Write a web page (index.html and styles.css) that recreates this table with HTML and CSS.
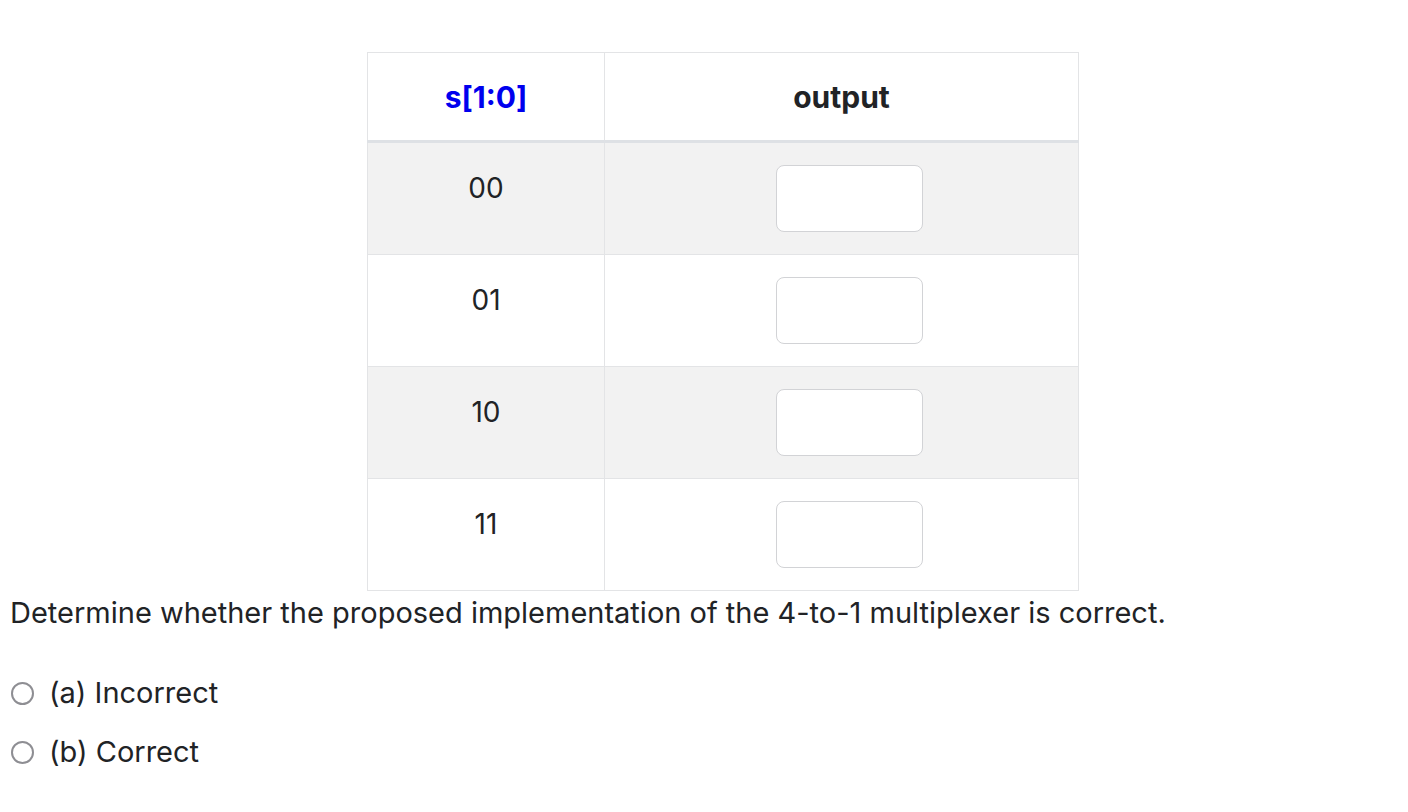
FILE: index.html
```html
<!DOCTYPE html>
<html>
<head>
<meta charset="utf-8">
<link rel="stylesheet" href="styles.css">
</head>
<body>
<div class="page">
  <table class="truth">
    <thead>
      <tr><th class="sel">s[1:0]</th><th class="out">output</th></tr>
    </thead>
    <tbody>
      <tr class="odd"><td class="key"><div class="num">00</div></td><td class="val"><input class="box" type="text"></td></tr>
      <tr><td class="key"><div class="num">01</div></td><td class="val"><input class="box" type="text"></td></tr>
      <tr class="odd"><td class="key"><div class="num">10</div></td><td class="val"><input class="box" type="text"></td></tr>
      <tr><td class="key"><div class="num">11</div></td><td class="val"><input class="box" type="text"></td></tr>
    </tbody>
  </table>
  <p class="question">Determine whether the proposed implementation of the 4-to-1 multiplexer is correct.</p>
  <div class="choices">
    <label class="choice"><span class="radio"></span><span>(a) Incorrect</span></label>
    <label class="choice"><span class="radio"></span><span>(b) Correct</span></label>
  </div>
</div>
</body>
</html>
```
FILE: styles.css
```css
html, body { margin: 0; padding: 0; background: #fff; }
body { font-family: Inter, "Noto Sans", sans-serif; color: #212326; }
.page { padding: 52px 0 0 10px; }
.truth {
  border-collapse: collapse;
  margin-left: 357px;
  width: 712px;
}
.truth th, .truth td {
  border: 1px solid #e3e4e6;
  text-align: center;
}
.truth th {
  height: 87px;
  font-size: 30px;
  font-weight: 700;
  border-bottom: 3px solid #dee1e5;
  padding: 0;
}
.truth th.sel { width: 236px; color: #0000ee; }
.truth th.out { color: #212326; }
.truth td { height: 111px; padding: 0; }
.truth tr.odd td { background: #f2f2f2; }
.truth td.key { vertical-align: top; font-size: 28px; }
.num { padding-top: 27px; line-height: 36px; }
.truth td.val { padding-left: 16px; vertical-align: middle; }
.box {
  display: block;
  margin: 0 auto;
  width: 147px;
  height: 67px;
  box-sizing: border-box;
  border: 1px solid #d2d3d6;
  border-radius: 8px;
  background: #fff;
}
.question {
  margin: 4px 0 0 0;
  font-size: 29px;
  line-height: 36px;
}
.choices { margin-top: 44px; display: flex; flex-direction: column; gap: 23px; }
.choice { display: flex; align-items: center; gap: 15px; font-size: 29px; line-height: 36px; }
.radio {
  width: 23px; height: 23px;
  border: 2.5px solid #8e8e93;
  border-radius: 50%;
  box-sizing: border-box;
  margin-left: 1px;
}
```
